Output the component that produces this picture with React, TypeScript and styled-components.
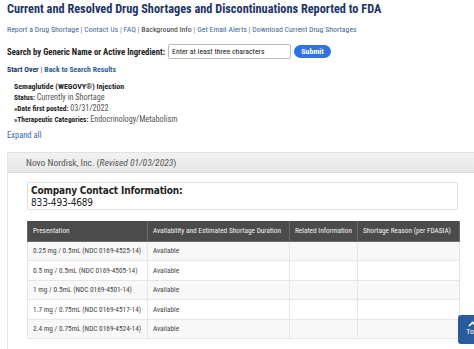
import React from "react";
import styled, { createGlobalStyle } from "styled-components";

const COND = `"Roboto Condensed", "Liberation Sans Narrow", "Arial Narrow", sans-serif`;

const Global = createGlobalStyle`
  html, body { margin: 0; padding: 0; background: #fff; }
  body { overflow: hidden; width: 474px; height: 349px; font-family: ${COND}; color: #333; }
  * { box-sizing: border-box; }
`;

const Page = styled.div`
  width: 474px;
  height: 349px;
  overflow: hidden;
  padding: 2px 0 0 7px;
  position: relative;
`;

const Title = styled.h1`
  margin: 0;
  font-size: 12.3px;
  line-height: 15px;
  font-weight: 700;
  color: #1d3567;
  white-space: nowrap;
`;

const Nav = styled.div`
  margin-top: 7px;
  font-size: 7.8px;
  line-height: 12px;
  color: #777;
  white-space: nowrap;
`;

const NavLink = styled.a<{ $current?: boolean }>`
  color: ${(p) => (p.$current ? "#333" : "#42699b")};
  text-decoration: none;
`;

const SearchRow = styled.div`
  margin-top: 8px;
  display: flex;
  align-items: center;
  height: 15px;
`;

const SearchLabel = styled.label`
  width: 158px;
  font-size: 8.7px;
  font-weight: 700;
  color: #222;
  white-space: nowrap;
  margin-right: 3px;
`;

const SearchInput = styled.div`
  width: 123px;
  height: 15px;
  border: 1px solid #bbb;
  border-radius: 2px;
  font-size: 7.8px;
  line-height: 13px;
  color: #222;
  padding-left: 3px;
  white-space: nowrap;
  overflow: hidden;
`;

const SubmitButton = styled.button`
  margin-left: 3px;
  width: 37px;
  height: 13px;
  border: none;
  border-radius: 7px;
  background: #2f72e0;
  color: #fff;
  font-family: ${COND};
  font-size: 8px;
  font-weight: 700;
  padding: 0;
  line-height: 13px;
`;

const Crumbs = styled.div`
  margin-top: 5px;
  font-size: 7.8px;
  line-height: 12px;
  font-weight: 700;
  color: #777;
`;

const Crumb = styled.a<{ $dark?: boolean }>`
  color: ${(p) => (p.$dark ? "#1d3567" : "#2f5f9e")};
  text-decoration: none;
`;

const Details = styled.div`
  margin-top: 2px;
  padding-left: 7px;
  display: flex;
  flex-direction: column;
`;

const DetailLine = styled.div`
  height: 11px;
  line-height: 11px;
  white-space: nowrap;
  color: #333;
`;

const Label = styled.span<{ $big?: boolean }>`
  font-size: ${(p) => (p.$big ? "7.9px" : "7.4px")};
  font-weight: 700;
  color: #222;
`;

const Value = styled.span`
  font-size: 8.2px;
  color: #555;
`;

const ExpandAll = styled.a`
  display: block;
  margin-top: 7px;
  font-size: 8.5px;
  line-height: 12px;
  color: #3a6aa8;
  text-decoration: none;
`;

const Panel = styled.section`
  margin-top: 11px;
  width: 480px;
  border: 1px solid #e2e2e2;
  border-right: none;
  background: #fff;
`;

const PanelHeader = styled.div`
  height: 20px;
  background: linear-gradient(#f1f1f1, #e8e8e8);
  border-bottom: 1px solid #dadada;
  padding-left: 18px;
  font-size: 9.5px;
  line-height: 19px;
  color: #555;
`;

const Revised = styled.em`
  font-style: italic;
`;

const PanelBody = styled.div`
  padding: 9px 0 10px 19px;
`;

const ContactBox = styled.div`
  width: 431px;
  height: 28px;
  border: 1px solid #dedede;
  border-radius: 2px;
  padding: 2px 0 0 3px;
  font-family: "DejaVu Sans Condensed", "DejaVu Sans", sans-serif;
  font-size: 10px;
  letter-spacing: -0.15px;
  line-height: 12px;
  color: #222;
`;

const ContactTitle = styled.div`
  font-weight: 700;
`;

const Table = styled.table`
  margin-top: 11px;
  width: 432px;
  border-collapse: collapse;
  table-layout: fixed;
  font-size: 7.3px;
`;

const Th = styled.th<{ $w: number }>`
  width: ${(p) => p.$w}px;
  height: 20px;
  background: #4b4b4b;
  color: #f2f2f2;
  font-weight: 400;
  text-align: left;
  padding: 0 5px;
  border: 1px solid #6a6a6a;
  border-top: none;
  white-space: nowrap;
`;

const Tr = styled.tr<{ $alt: boolean }>`
  background: ${(p) => (p.$alt ? "#f8f8f8" : "#fff")};
`;

const Td = styled.td`
  height: 19.5px;
  padding: 0 5px;
  border: 1px solid #e6e6e6;
  color: #444;
  white-space: nowrap;
`;

const TopButton = styled.a`
  position: absolute;
  left: 458px;
  top: 315px;
  width: 28px;
  height: 29px;
  border-radius: 3px;
  background: #2a5b9c;
  color: #fff;
  display: flex;
  flex-direction: column;
  align-items: center;
  padding-top: 6px;
  font-size: 8px;
  line-height: 9px;
  text-decoration: none;
`;

const rows = [
  "0.25 mg / 0.5mL (NDC 0169-4525-14)",
  "0.5 mg / 0.5mL (NDC 0169-4505-14)",
  "1 mg / 0.5mL (NDC 0169-4501-14)",
  "1.7 mg / 0.75mL (NDC 0169-4517-14)",
  "2.4 mg / 0.75mL (NDC 0169-4524-14)",
];

export default function App() {
  return (
    <Page>
      <Global />
      <Title>Current and Resolved Drug Shortages and Discontinuations Reported to FDA</Title>
      <Nav>
        <NavLink>Report a Drug Shortage</NavLink> | <NavLink>Contact Us</NavLink> | <NavLink>FAQ</NavLink> |{" "}
        <NavLink $current>Background Info</NavLink> | <NavLink>Get Email Alerts</NavLink> |{" "}
        <NavLink>Download Current Drug Shortages</NavLink>
      </Nav>
      <SearchRow>
        <SearchLabel>Search by Generic Name or Active Ingredient:</SearchLabel>
        <SearchInput>Enter at least three characters</SearchInput>
        <SubmitButton>Submit</SubmitButton>
      </SearchRow>
      <Crumbs>
        <Crumb $dark>Start Over</Crumb> | <Crumb>Back to Search Results</Crumb>
      </Crumbs>
      <Details>
        <DetailLine>
          <Label $big>Semaglutide (WEGOVY®) Injection</Label>
        </DetailLine>
        <DetailLine>
          <Label>Status: </Label>
          <Value>Currently in Shortage</Value>
        </DetailLine>
        <DetailLine>
          <Label>»Date first posted: </Label>
          <Value>03/31/2022</Value>
        </DetailLine>
        <DetailLine>
          <Label>»Therapeutic Categories: </Label>
          <Value>Endocrinology/Metabolism</Value>
        </DetailLine>
      </Details>
      <ExpandAll>Expand all</ExpandAll>
      <Panel>
        <PanelHeader>
          Novo Nordisk, Inc. (<Revised>Revised 01/03/2023</Revised>)
        </PanelHeader>
        <PanelBody>
          <ContactBox>
            <ContactTitle>Company Contact Information:</ContactTitle>
            <div>833-493-4689</div>
          </ContactBox>
          <Table>
            <thead>
              <tr>
                <Th $w={120}>Presentation</Th>
                <Th $w={142}>Availability and Estimated Shortage Duration</Th>
                <Th $w={68}>Related Information</Th>
                <Th $w={102}>Shortage Reason (per FDASIA)</Th>
              </tr>
            </thead>
            <tbody>
              {rows.map((r, i) => (
                <Tr key={r} $alt={i % 2 === 0}>
                  <Td>{r}</Td>
                  <Td>Available</Td>
                  <Td />
                  <Td />
                </Tr>
              ))}
            </tbody>
          </Table>
        </PanelBody>
      </Panel>
      <TopButton>
        <svg width="9" height="6" viewBox="0 0 9 6">
          <path d="M1 5 L4.5 1.5 L8 5" stroke="#fff" strokeWidth="1.6" fill="none" />
        </svg>
        <span>Top</span>
      </TopButton>
    </Page>
  );
}
